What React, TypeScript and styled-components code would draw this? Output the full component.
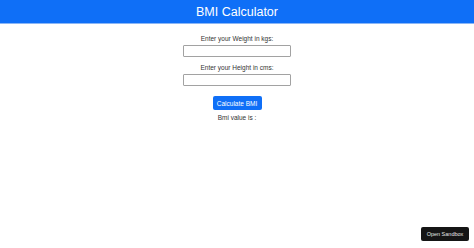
import React from "react"
import styled, { createGlobalStyle } from "styled-components"

const GlobalStyle = createGlobalStyle`
  html, body {
    margin: 0;
    padding: 0;
    background: #ffffff;
    font-family: "Liberation Sans", Arial, sans-serif;
  }
`

const Page = styled.div`
  width: 474px;
  height: 248px;
  display: flex;
  flex-direction: column;
  position: relative;
  overflow: hidden;
`

const Header = styled.header`
  height: 23px;
  background: #0f6ff7;
  border-bottom: 1px solid #8ab6f6;
  display: flex;
  align-items: center;
  justify-content: center;
  color: #ffffff;
  font-size: 12.5px;
`

const Form = styled.div`
  display: flex;
  flex-direction: column;
  align-items: center;
  padding-top: 10px;
`

const Label = styled.label`
  font-size: 6.5px;
  color: #333;
  line-height: 10px;
  margin-bottom: 1px;
`

const Input = styled.input`
  box-sizing: border-box;
  width: 108px;
  height: 12px;
  border: 1px solid #a2a2a2;
  border-radius: 1px;
  margin: 0 0 6px;
  padding: 0;
`

const Button = styled.button`
  margin-top: 4px;
  height: 14px;
  width: 49px;
  background: #0f6ff7;
  color: #fff;
  border: none;
  border-radius: 2px;
  font-family: "Liberation Sans", Arial, sans-serif;
  font-size: 6.5px;
  padding: 0;
`

const Result = styled.div`
  margin-top: 3px;
  font-size: 6.5px;
  line-height: 10px;
  color: #333;
`

const SandboxButton = styled.div`
  position: absolute;
  right: 5px;
  bottom: 7px;
  width: 48px;
  height: 14px;
  background: #151515;
  color: #e6e6e6;
  border-radius: 2px;
  font-size: 5.5px;
  display: flex;
  align-items: center;
  justify-content: center;
`

export default function App() {
  return (
    <>
      <GlobalStyle />
      <Page>
        <Header>BMI Calculator</Header>
        <Form>
          <Label>Enter your Weight in kgs:</Label>
          <Input type="text" />
          <Label>Enter your Height in cms:</Label>
          <Input type="text" />
          <Button>Calculate BMI</Button>
          <Result>Bmi value is :</Result>
        </Form>
        <SandboxButton>Open Sandbox</SandboxButton>
      </Page>
    </>
  )
}
